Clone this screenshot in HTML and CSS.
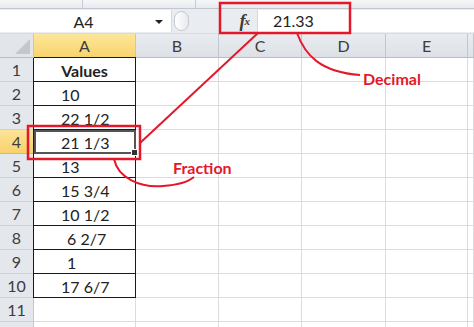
FILE: index.html
```html
<!DOCTYPE html>
<html lang="en">
  <head>
    <meta charset="UTF-8" />
    <meta name="viewport" content="width=device-width, initial-scale=1.0" />
    <title>Fraction vs Decimal</title>
    <link rel="stylesheet" href="styles.css">
  </head>
  <body>
    <div class="ribbon-edge">
      <span class="ribbon-edge__group ribbon-edge__group--a"></span>
      <span class="ribbon-edge__group ribbon-edge__group--b"></span>
      <span class="ribbon-edge__group"></span>
    </div>

    <div class="formula-bar">
      <div class="name-box">
        <span class="name-box__value">A4</span>
        <span class="name-box__arrow"></span>
      </div>
      <div class="grip"><span class="grip__knob"></span></div>
      <div class="fx-btn"><i>f</i><sub>x</sub></div>
      <div class="formula-input">21.33</div>
    </div>

    <div class="sheet">
      <div class="corner"></div>
      <div class="col-head col-head--active">A</div>
      <div class="col-head">B</div>
      <div class="col-head">C</div>
      <div class="col-head">D</div>
      <div class="col-head">E</div>
      <div class="col-head"></div>

      <div class="row-head">1</div>
      <div class="cell cell--table cell--top cell--title">Values</div>
      <div class="cell"></div><div class="cell"></div><div class="cell"></div><div class="cell"></div><div class="cell"></div>

      <div class="row-head">2</div>
      <div class="cell cell--table">10</div>
      <div class="cell"></div><div class="cell"></div><div class="cell"></div><div class="cell"></div><div class="cell"></div>

      <div class="row-head">3</div>
      <div class="cell cell--table">22 1/2</div>
      <div class="cell"></div><div class="cell"></div><div class="cell"></div><div class="cell"></div><div class="cell"></div>

      <div class="row-head row-head--active">4</div>
      <div class="cell cell--table cell--selected">21 1/3</div>
      <div class="cell"></div><div class="cell"></div><div class="cell"></div><div class="cell"></div><div class="cell"></div>

      <div class="row-head">5</div>
      <div class="cell cell--table">13</div>
      <div class="cell"></div><div class="cell"></div><div class="cell"></div><div class="cell"></div><div class="cell"></div>

      <div class="row-head">6</div>
      <div class="cell cell--table">15 3/4</div>
      <div class="cell"></div><div class="cell"></div><div class="cell"></div><div class="cell"></div><div class="cell"></div>

      <div class="row-head">7</div>
      <div class="cell cell--table">10 1/2</div>
      <div class="cell"></div><div class="cell"></div><div class="cell"></div><div class="cell"></div><div class="cell"></div>

      <div class="row-head">8</div>
      <div class="cell cell--table cell--indent">6 2/7</div>
      <div class="cell"></div><div class="cell"></div><div class="cell"></div><div class="cell"></div><div class="cell"></div>

      <div class="row-head">9</div>
      <div class="cell cell--table cell--indent">1</div>
      <div class="cell"></div><div class="cell"></div><div class="cell"></div><div class="cell"></div><div class="cell"></div>

      <div class="row-head">10</div>
      <div class="cell cell--table">17 6/7</div>
      <div class="cell"></div><div class="cell"></div><div class="cell"></div><div class="cell"></div><div class="cell"></div>

      <div class="row-head">11</div>
      <div class="cell"></div><div class="cell"></div><div class="cell"></div><div class="cell"></div><div class="cell"></div><div class="cell"></div>

      <div class="row-head"></div>
      <div class="cell"></div><div class="cell"></div><div class="cell"></div><div class="cell"></div><div class="cell"></div><div class="cell"></div>
    </div>

    <!-- red callouts drawn over the sheet -->
    <svg class="callouts" width="474" height="327" viewBox="0 0 474 327">
      <rect x="220" y="3" width="130" height="30" />
      <rect x="28" y="126" width="112" height="33" />
      <path d="M140 143 L258 33" />
      <path d="M114 159 C118 178 140 188 163 186 C178 185 188 182 194 177" />
      <path d="M297 33 C305 55 320 72 360 75" />
      <text x="173" y="174">Fraction</text>
      <text x="363" y="85">Decimal</text>
    </svg>
  </body>
</html>
```

FILE: styles.css
```css
html,
body {
  margin: 0;
  width: 474px;
  height: 327px;
  overflow: hidden;
  background: #fff;
  font-family: Lato, "Liberation Sans", sans-serif;
  color: #222;
  position: relative;
}

.ribbon-edge {
  display: flex;
  height: 8px;
  background: linear-gradient(#f6f7f9, #e7eaee);
}
.ribbon-edge__group {
  flex: 1;
}
.ribbon-edge__group--a {
  flex: 0 0 82px;
  border-right: 1px solid #c9cdd3;
}
.ribbon-edge__group--b {
  flex: 0 0 112px;
  border-right: 1px solid #c9cdd3;
}

.formula-bar {
  display: flex;
  height: 22px;
  padding: 1px 0;
  background: #e9ecf0;
  border-top: 1px solid #c4c8ce;
}

.name-box {
  display: flex;
  align-items: center;
  width: 172px;
  background: #fff;
  border-right: 1px solid #d4d7dc;
  box-sizing: border-box;
}
.name-box__value {
  flex: 1;
  text-align: center;
  font-size: 16px;
  padding-left: 12px;
}
.name-box__arrow {
  width: 0;
  height: 0;
  margin: 2px 8px 0 0;
  border-left: 4px solid transparent;
  border-right: 4px solid transparent;
  border-top: 4px solid #222;
}

.grip {
  width: 47px;
  display: flex;
  align-items: center;
}
.grip__knob {
  width: 13px;
  height: 18px;
  margin-left: 2px;
  border: 1px solid #c3c7cd;
  border-radius: 9px;
  background: linear-gradient(90deg, #fff, #e7eaee);
}

.fx-btn {
  width: 38px;
  display: flex;
  align-items: center;
  justify-content: flex-end;
  padding-right: 7px;
  box-sizing: border-box;
  font-family: "Liberation Serif", serif;
  font-size: 18px;
  font-weight: bold;
  color: #3a3a3a;
  border-left: 1px solid #d0d3d8;
}
.fx-btn sub {
  font-size: 11px;
  font-style: italic;
  vertical-align: -3px;
  margin-left: -1px;
}

.formula-input {
  flex: 1;
  background: #fff;
  font-size: 16px;
  line-height: 22px;
  padding-left: 15px;
  border-left: 1px solid #d4d7dc;
}

.sheet {
  display: grid;
  grid-template-columns: 34px 102px 83px 83px 84px 82px 6px;
  grid-template-rows: repeat(12, 24px) 6px;
  border-top: 1px solid #d8dbe0;
}
.sheet > div {
  box-sizing: border-box;
}

.corner {
  background: #e2e6eb;
  border-right: 1px solid #c2c7ce;
  border-bottom: 1px solid #b9bec6;
  position: relative;
}
.corner::after {
  content: "";
  position: absolute;
  right: 3px;
  bottom: 3px;
  border-left: 15px solid transparent;
  border-bottom: 15px solid #c3c8cf;
}

.col-head {
  display: flex;
  align-items: center;
  justify-content: center;
  font-size: 16px;
  color: #3c3c3c;
  background: linear-gradient(#e9ecf0, #dde1e7);
  border-right: 1px solid #c2c7ce;
  border-bottom: 1px solid #b9bec6;
}
.col-head--active {
  background: linear-gradient(#fde69b, #f8d46c);
  border-bottom-color: #e2b84c;
}

.row-head {
  display: flex;
  align-items: center;
  justify-content: center;
  font-size: 16px;
  color: #3c3c3c;
  background: #e4e8ed;
  border-right: 1px solid #c2c7ce;
  border-bottom: 1px solid #cdd2d8;
}
.row-head--active {
  background: linear-gradient(#fde39a, #f8d36c);
  border-bottom-color: #e2b84c;
}

.cell {
  border-right: 1px solid #dadcdf;
  border-bottom: 1px solid #dadcdf;
  font-size: 16px;
  line-height: 25px;
  white-space: nowrap;
}

.cell--table {
  border-right-color: #1a1a1a;
  border-bottom-color: #1a1a1a;
  box-shadow: -1px 0 0 #1a1a1a;
  padding-left: 27px;
}
.cell--top {
  box-shadow: -1px 0 0 #1a1a1a, 0 -1px 0 #1a1a1a, -1px -1px 0 #1a1a1a;
}
.cell--title {
  padding-left: 0;
  text-align: center;
  font-weight: bold;
}
.cell--indent {
  padding-left: 33px;
}
.cell--selected {
  position: relative;
  outline: 2px solid #555;
  outline-offset: -2px;
}
.cell--selected::after {
  content: "";
  position: absolute;
  right: -3px;
  bottom: -3px;
  width: 5px;
  height: 5px;
  background: #333;
  border: 1px solid #fff;
}

.callouts {
  position: absolute;
  top: 0;
  left: 0;
  pointer-events: none;
}
.callouts rect,
.callouts path {
  fill: none;
  stroke: #e3192b;
  stroke-width: 2.5;
}
.callouts path {
  stroke-width: 2;
}
.callouts text {
  fill: #e3192b;
  font-family: Lato, "Liberation Sans", sans-serif;
  font-weight: bold;
  font-size: 16px;
}
```
